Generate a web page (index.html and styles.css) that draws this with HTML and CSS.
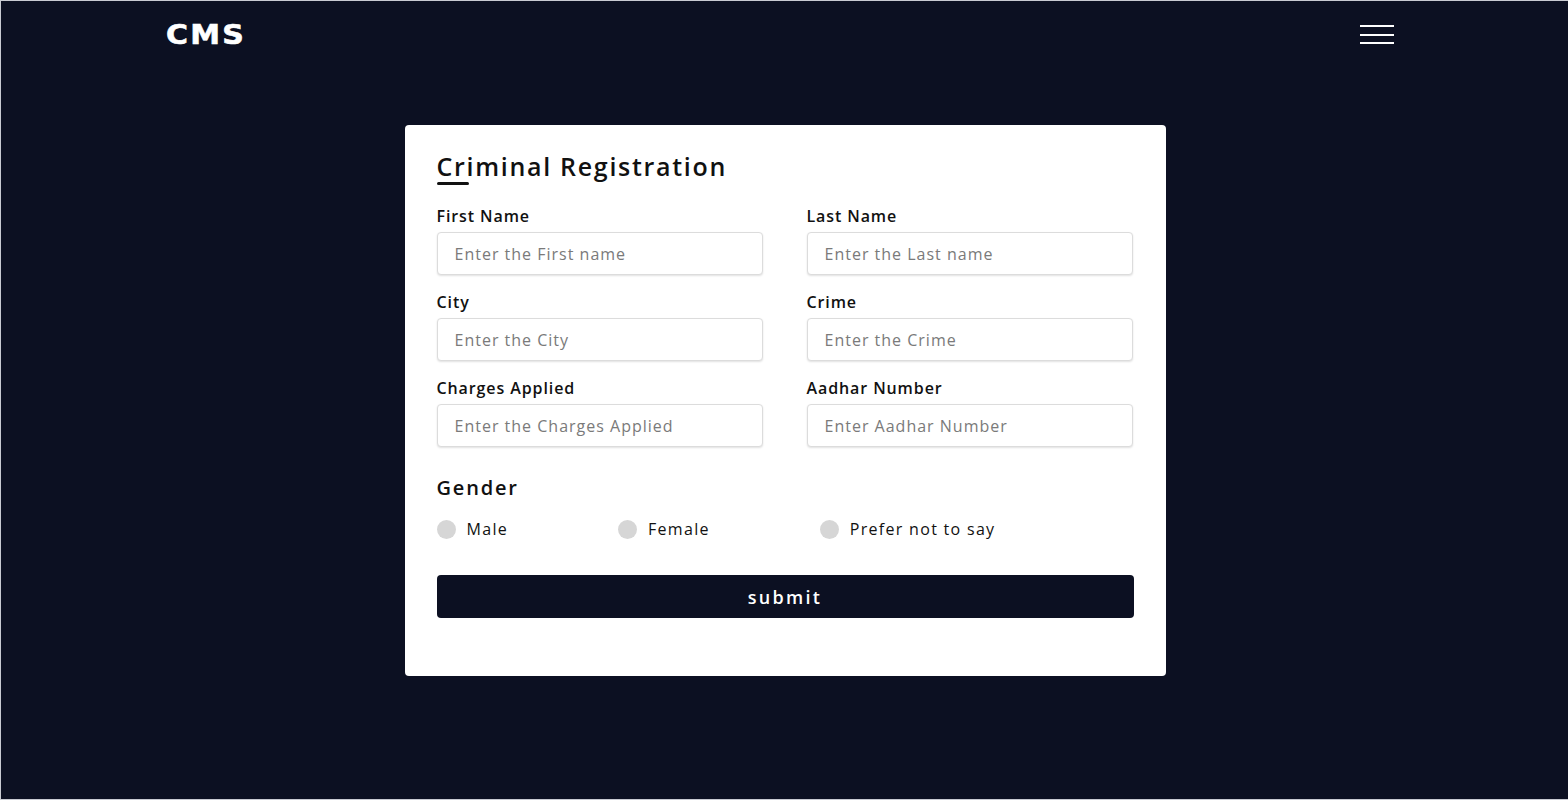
FILE: index.html
```html
<!DOCTYPE html>
<html lang="en">
<head>
<meta charset="utf-8">
<title>CMS - Criminal Registration</title>
<link rel="stylesheet" href="styles.css">
</head>
<body>
<div class="page">
  <header class="nav">
    <div class="logo">CMS</div>
    <button class="menu" aria-label="Menu">
      <span></span><span></span><span></span>
    </button>
  </header>
  <main class="main">
    <form class="card">
      <h1 class="title">Criminal Registration</h1>
      <div class="grid">
        <div class="field">
          <label class="label">First Name</label>
          <input class="input" type="text" placeholder="Enter the First name">
        </div>
        <div class="field">
          <label class="label">Last Name</label>
          <input class="input" type="text" placeholder="Enter the Last name">
        </div>
        <div class="field">
          <label class="label">City</label>
          <input class="input" type="text" placeholder="Enter the City">
        </div>
        <div class="field">
          <label class="label">Crime</label>
          <input class="input" type="text" placeholder="Enter the Crime">
        </div>
        <div class="field">
          <label class="label">Charges Applied</label>
          <input class="input" type="text" placeholder="Enter the Charges Applied">
        </div>
        <div class="field">
          <label class="label">Aadhar Number</label>
          <input class="input" type="text" placeholder="Enter Aadhar Number">
        </div>
      </div>
      <div class="gender">
        <div class="gender-title">Gender</div>
        <div class="options">
          <label class="option"><span class="dot"></span>Male</label>
          <label class="option"><span class="dot"></span>Female</label>
          <label class="option"><span class="dot"></span>Prefer not to say</label>
        </div>
      </div>
      <button class="submit" type="button">submit</button>
    </form>
  </main>
</div>
</body>
</html>
```
FILE: styles.css
```css
* { box-sizing: border-box; }
html, body { margin: 0; padding: 0; height: 100%; }
body {
  background: #c9cbd2;
  font-family: "Open Sans", "Noto Sans", sans-serif;
}
.page {
  margin: 1px 0 1px 1px;
  height: 798px;
  background: #0c1022;
  display: flex;
  flex-direction: column;
}
.nav {
  display: flex;
  justify-content: space-between;
  align-items: center;
  padding: 15px 174px 0 165px;
  height: 54px;
}
.logo {
  color: #fff;
  font-family: "DejaVu Sans", "Open Sans", sans-serif;
  font-weight: 700;
  font-size: 26px;
  letter-spacing: 2px;
  line-height: 30px;
  margin-bottom: 2px;
  transform: scaleX(1.15);
  transform-origin: left center;
  -webkit-text-stroke: 0.6px #fff;
}
.menu {
  background: none;
  border: 0;
  padding: 0;
  width: 34px;
  height: 19px;
  margin-bottom: 2px;
  display: flex;
  flex-direction: column;
  justify-content: space-between;
}
.menu span {
  display: block;
  height: 2px;
  width: 34px;
  background: #fff;
}
.main {
  display: flex;
  justify-content: center;
  padding-top: 70px;
  padding-left: 1px;
}
.card {
  width: 761px;
  height: 551px;
  background: #fff;
  border-radius: 4px;
  padding: 25px 32px 0 32px;
}
.title {
  margin: 0;
  font-size: 25px;
  font-weight: 600;
  color: #111;
  position: relative;
  line-height: 32px;
  letter-spacing: 1.7px;
}
.title::after {
  content: "";
  position: absolute;
  left: 0;
  bottom: -3px;
  width: 32px;
  height: 3px;
  border-radius: 2px;
  background: #111;
}
.grid {
  display: grid;
  grid-template-columns: 326px 326px;
  column-gap: 44px;
  row-gap: 17px;
  margin-top: 24px;
}
.field {
  display: flex;
  flex-direction: column;
}
.label {
  font-size: 16px;
  font-weight: 600;
  color: #111;
  line-height: 20px;
  margin-bottom: 6px;
  letter-spacing: 0.9px;
}
.input {
  height: 43px;
  border: 1px solid #dcdcdc;
  border-radius: 4px;
  box-shadow: 0 1px 2px rgba(0,0,0,0.12);
  padding: 0 17px;
  font-family: "Open Sans", sans-serif;
  font-size: 16px;
  letter-spacing: 1px;
  color: #333;
  outline: none;
}
.input::placeholder { color: #7a7a7a; }
.gender { margin-top: 28px; }
.gender-title {
  font-size: 20px;
  font-weight: 600;
  color: #111;
  line-height: 26px;
  letter-spacing: 1.8px;
}
.options {
  display: flex;
  gap: 110px;
  margin-top: 18px;
}
.option {
  display: flex;
  align-items: center;
  gap: 11px;
  font-size: 16px;
  color: #111;
  line-height: 20px;
  letter-spacing: 1.3px;
}
.dot {
  width: 19px;
  height: 19px;
  border-radius: 50%;
  background: #d6d6d6;
}
.submit {
  margin-top: 36px;
  width: 100%;
  height: 43px;
  background: #0c1022;
  border: 0;
  border-radius: 4px;
  color: #fff;
  font-family: "Open Sans", sans-serif;
  font-size: 18px;
  font-weight: 600;
  letter-spacing: 2.3px;
}
```
